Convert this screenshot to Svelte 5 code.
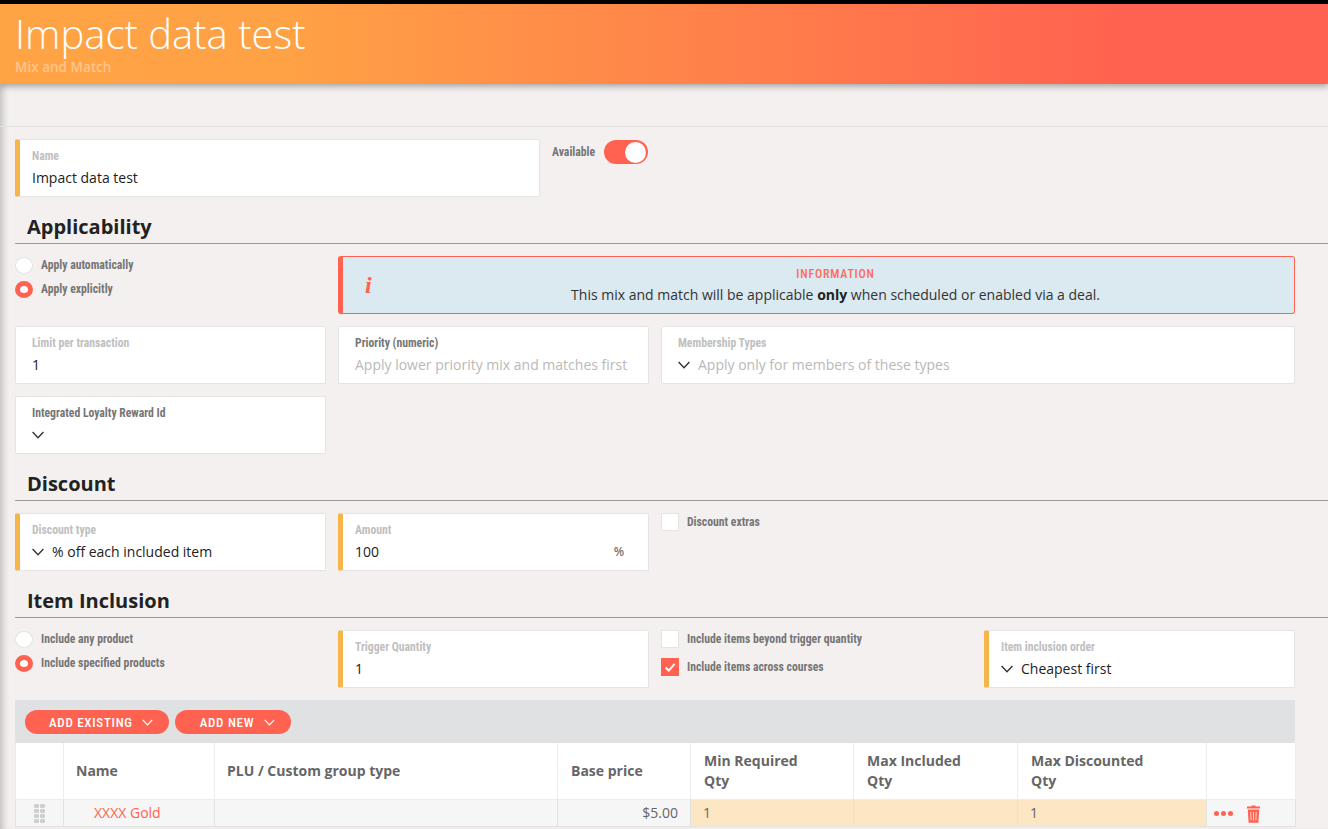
<script lang="ts">
  const columns = [
    { name: 'Name' },
    { name: 'PLU / Custom group type' },
    { name: 'Base price' },
    { name: 'Min Required Qty' },
    { name: 'Max Included Qty' },
    { name: 'Max Discounted Qty' }
  ];
</script>

{#snippet chevron()}
  <svg class="chevron" viewBox="0 0 12 8" width="12" height="8" aria-hidden="true">
    <path d="M.6 1 6 6.8 11.4 1" fill="none" stroke="currentColor" stroke-width="1.4" />
  </svg>
{/snippet}

{#snippet radio(label: string, checked: boolean)}
  <div class="radio-row">
    <span class="radio" class:checked></span>
    <span class="opt-label">{label}</span>
  </div>
{/snippet}

{#snippet check(label: string, checked: boolean)}
  <div class="check-row">
    <span class="check" class:checked>
      {#if checked}
        <svg viewBox="0 0 16 16" width="16" height="16" aria-hidden="true">
          <path d="M3.5 8.5 6.8 11.6 12.6 4.8" fill="none" stroke="#fff" stroke-width="2" />
        </svg>
      {/if}
    </span>
    <span class="opt-label">{label}</span>
  </div>
{/snippet}

<header class="banner">
  <h1>Impact data test</h1>
  <div class="subtitle">Mix and Match</div>
</header>

<main class="page">
  <div class="toolbar-space"></div>

  <div class="name-row">
    <div class="field required name-field">
      <span class="field-label muted">Name</span>
      <div class="field-value">Impact data test</div>
    </div>
    <div class="available">
      <span class="opt-label">Available</span>
      <span class="toggle"><span class="knob"></span></span>
    </div>
  </div>

  <h2 class="section">Applicability</h2>
  <div class="grid">
    <div class="radios">
      {@render radio('Apply automatically', false)}
      {@render radio('Apply explicitly', true)}
    </div>
    <div class="info span3">
      <i class="info-icon">i</i>
      <div class="info-body">
        <div class="info-title">INFORMATION</div>
        <div class="info-text">This mix and match will be applicable <strong>only</strong> when scheduled or enabled via a deal.</div>
      </div>
    </div>

    <div class="field">
      <span class="field-label muted">Limit per transaction</span>
      <div class="field-value">1</div>
    </div>
    <div class="field">
      <span class="field-label">Priority (numeric)</span>
      <div class="field-value placeholder">Apply lower priority mix and matches first</div>
    </div>
    <div class="field span2">
      <span class="field-label muted">Membership Types</span>
      <div class="field-value placeholder">{@render chevron()}Apply only for members of these types</div>
    </div>

    <div class="field">
      <span class="field-label">Integrated Loyalty Reward Id</span>
      <div class="field-value">{@render chevron()}</div>
    </div>
  </div>

  <h2 class="section">Discount</h2>
  <div class="grid">
    <div class="field required">
      <span class="field-label muted">Discount type</span>
      <div class="field-value">{@render chevron()}% off each included item</div>
    </div>
    <div class="field required">
      <span class="field-label muted">Amount</span>
      <div class="field-value amount">100<span class="unit">%</span></div>
    </div>
    <div class="checks">
      {@render check('Discount extras', false)}
    </div>
  </div>

  <h2 class="section">Item Inclusion</h2>
  <div class="grid">
    <div class="radios">
      {@render radio('Include any product', false)}
      {@render radio('Include specified products', true)}
    </div>
    <div class="field required">
      <span class="field-label muted">Trigger Quantity</span>
      <div class="field-value">1</div>
    </div>
    <div class="checks">
      {@render check('Include items beyond trigger quantity', false)}
      {@render check('Include items across courses', true)}
    </div>
    <div class="field required">
      <span class="field-label muted">Item inclusion order</span>
      <div class="field-value">{@render chevron()}Cheapest first</div>
    </div>
  </div>

  <section class="items">
    <div class="items-bar">
      <button class="pill">ADD EXISTING {@render chevron()}</button>
      <button class="pill">ADD NEW {@render chevron()}</button>
    </div>
    <table>
      <colgroup>
        <col style="width: 48px" />
        <col style="width: 151px" />
        <col style="width: 343px" />
        <col style="width: 133px" />
        <col style="width: 163px" />
        <col style="width: 164px" />
        <col style="width: 189px" />
        <col style="width: 89px" />
      </colgroup>
      <thead>
        <tr>
          <th></th>
          {#each columns as col}
            <th>{col.name}</th>
          {/each}
          <th></th>
        </tr>
      </thead>
      <tbody>
        <tr>
          <td class="drag">
            <span class="dots">
              {#each Array(8) as _}<span></span>{/each}
            </span>
          </td>
          <td class="item-name">XXXX Gold</td>
          <td></td>
          <td class="price">$5.00</td>
          <td class="editable">1</td>
          <td class="editable"></td>
          <td class="editable">1</td>
          <td class="actions">
            <span class="more"><span></span><span></span><span></span></span>
            <svg class="trash" viewBox="0 0 13 18" width="13" height="18" aria-hidden="true">
              <path d="M4.4 1.6V.4h4.2v1.2h4.4v2H0v-2z" fill="#ff6250" />
              <path d="M.8 4.6h11.4l-.8 13.2H1.6z" fill="#ff6250" />
              <path d="M3.8 7l.3 8.4M6.5 7v8.4M9.2 7l-.3 8.4" fill="none" stroke="#fbd9cf" stroke-width="1" />
            </svg>
          </td>
        </tr>
      </tbody>
    </table>
  </section>
</main>

<style>
  :global(html), :global(body) {
    margin: 0;
    height: 829px;
    overflow: hidden;
    background: #f3f0ef;
  }

  :global(body) {
    font-family: "Open Sans", sans-serif;
    color: #222;
  }

  .banner {
    position: relative;
    z-index: 1;
    box-sizing: border-box;
    height: 84px;
    padding: 10px 15px 0;
    border-top: 4px solid #000;
    background: linear-gradient(90deg, #ffa445 0%, #ffa145 22%, #ff6250 85%, #ff6250 100%);
    box-shadow: 0 3px 6px rgba(0, 0, 0, 0.28);
  }

  h1 {
    margin: 0;
    font-size: 40px;
    font-weight: 300;
    line-height: 40px;
    color: #fff;
  }

  .subtitle {
    margin-top: 5px;
    font-size: 13.5px;
    font-weight: 600;
    line-height: 16px;
    color: rgba(255, 255, 255, 0.4);
  }

  .page {
    height: 745px;
    box-shadow: inset 7px 0 6px -4px rgba(0, 0, 0, 0.2);
    overflow: hidden;
  }

  .toolbar-space {
    height: 42px;
    border-bottom: 1px solid #e4e2e1;
  }

  .opt-label,
  .field-label {
    font-family: "Liberation Sans Narrow", "Roboto Condensed", Roboto, sans-serif;
    font-size: 13px;
    font-weight: 700;
    color: #767676;
    line-height: 14px;
    transform: scaleX(0.9);
    transform-origin: left center;
    white-space: nowrap;
  }

  .name-row {
    display: flex;
    gap: 12px;
    margin: 12px 0 0 15px;
  }

  .name-field {
    width: 525px;
  }

  .available {
    display: flex;
    align-items: flex-start;
    gap: 4px;
    padding-top: 1px;
  }

  .available .opt-label {
    margin-top: 5px;
  }

  .toggle {
    display: flex;
    justify-content: flex-end;
    align-items: center;
    box-sizing: border-box;
    width: 44px;
    height: 24px;
    padding: 1.5px;
    border-radius: 12px;
    background: #ff6250;
  }

  .knob {
    width: 21px;
    height: 21px;
    border-radius: 50%;
    background: #fff;
  }

  .field {
    box-sizing: border-box;
    height: 58px;
    padding: 9px 16px 0;
    background: #fff;
    border: 1px solid #e5e3e3;
    border-radius: 2px;
  }

  .field.required {
    padding-left: 12px;
    border-left: 5px solid #f5b54a;
  }

  .field-label {
    display: block;
  }

  .field-label.muted {
    color: #c0c0c0;
  }

  .field-value {
    display: flex;
    align-items: center;
    height: 20px;
    margin-top: 5px;
    font-size: 14px;
    line-height: 20px;
    color: #222;
    white-space: nowrap;
  }

  .field-value.placeholder {
    color: #b9b9b9;
  }

  .chevron {
    flex: none;
    margin-right: 8px;
    color: #333;
  }

  .amount {
    justify-content: space-between;
    padding-right: 8px;
  }

  .unit {
    font-size: 12px;
    font-weight: 600;
    color: #777;
  }

  .section {
    margin: 16px 0 12px 15px;
    padding: 0 0 3px 12px;
    font-size: 20px;
    font-weight: 700;
    line-height: 27px;
    color: #222;
    border-bottom: 1px solid #999;
  }

  .grid {
    display: grid;
    grid-template-columns: repeat(4, 311px);
    gap: 12px;
    margin-left: 15px;
  }

  .span2 {
    grid-column: span 2;
  }

  .span3 {
    grid-column: span 3;
  }

  .radios {
    display: flex;
    flex-direction: column;
    gap: 6px;
  }

  .radio-row,
  .check-row {
    display: flex;
    align-items: center;
    height: 18px;
  }

  .radio {
    box-sizing: border-box;
    flex: none;
    align-self: flex-end;
    width: 18px;
    height: 17px;
    margin-right: 8px;
    border-radius: 50%;
    background: #fff;
    border: 1px solid #e5e3e3;
  }

  .radio.checked {
    border: 5px solid #ff6250;
  }

  .checks {
    display: flex;
    flex-direction: column;
    gap: 10px;
  }

  .check {
    box-sizing: border-box;
    flex: none;
    display: flex;
    width: 18px;
    height: 18px;
    margin-right: 8px;
    background: #fff;
    border: 1px solid #e5e3e3;
  }

  .check.checked {
    background: #ff6250;
    border-color: #ff6250;
  }

  .info {
    box-sizing: border-box;
    display: flex;
    height: 58px;
    background: #dbe9f0;
    border: 1px solid #ff6250;
    border-left-width: 5px;
    border-radius: 3px;
  }

  .info-icon {
    width: 40px;
    padding-left: 22px;
    box-sizing: border-box;
    font-family: "Liberation Serif", serif;
    font-size: 24px;
    font-weight: 700;
    line-height: 56px;
    color: #ff6250;
  }

  .info-body {
    flex: 1;
    padding-top: 10px;
    padding-right: 6px;
    text-align: center;
  }

  .info-title {
    font-family: "Liberation Sans Narrow", "Roboto Condensed", Roboto, sans-serif;
    font-size: 12px;
    font-weight: 500;
    letter-spacing: 0.8px;
    line-height: 14px;
    color: #ff6b5a;
  }

  .info-text {
    margin-top: 4px;
    font-size: 14px;
    line-height: 20px;
    color: #333;
  }

  .info-text strong {
    font-weight: 700;
    color: #222;
  }

  .items {
    width: 1280px;
    margin: 12px 0 0 15px;
  }

  .items-bar {
    display: flex;
    gap: 6px;
    box-sizing: border-box;
    height: 43px;
    padding: 10px 10px 0;
    background: #e0e1e3;
  }

  .pill {
    display: flex;
    align-items: center;
    gap: 9px;
    height: 24px;
    padding: 0 16px 0 24px;
    border: none;
    border-radius: 12px;
    background: #ff6250;
    color: #fff;
    font-family: "Liberation Sans Narrow", "Roboto Condensed", Roboto, sans-serif;
    font-size: 13px;
    font-weight: 500;
    letter-spacing: 0.7px;
  }

  .pill + .pill {
    gap: 10px;
    padding-left: 25px;
  }

  .pill .chevron {
    width: 11px;
    height: 7px;
    margin-right: 0;
    color: #fff;
  }

  table {
    width: 1280px;
    table-layout: fixed;
    border-collapse: collapse;
    background: #fff;
  }

  th {
    box-sizing: border-box;
    height: 56px;
    padding: 0 40px 0 12px;
    border: 1px solid #ececec;
    border-top: none;
    font-size: 14px;
    font-weight: 700;
    line-height: 20px;
    text-align: left;
    color: #666;
  }

  th:nth-child(n + 4) {
    padding-left: 13px;
  }

  td {
    height: 26px;
    padding: 0 12px;
    border: 1px solid #e2e2e2;
    background: #f6f6f6;
    font-size: 14px;
    line-height: 20px;
    color: #666;
  }

  td.drag {
    padding: 0;
    text-align: center;
  }

  .dots {
    display: inline-grid;
    grid-template-columns: repeat(2, 5px);
    grid-auto-rows: 4px;
    gap: 1px;
    vertical-align: middle;
  }

  .dots span {
    border-radius: 1px;
    background: #cfcfcf;
  }

  .item-name {
    padding-left: 30px;
    color: #ff6250;
  }

  .price {
    text-align: right;
    padding-right: 12px;
  }

  .editable {
    background: #fde6c4;
  }

  td.actions {
    padding: 0 0 0 7px;
    white-space: nowrap;
  }

  .more {
    display: inline-flex;
    gap: 2px;
    margin-right: 10px;
    vertical-align: middle;
  }

  .more span {
    width: 5px;
    height: 5px;
    border-radius: 50%;
    background: #ff6250;
  }

  .trash {
    vertical-align: middle;
  }
</style>
